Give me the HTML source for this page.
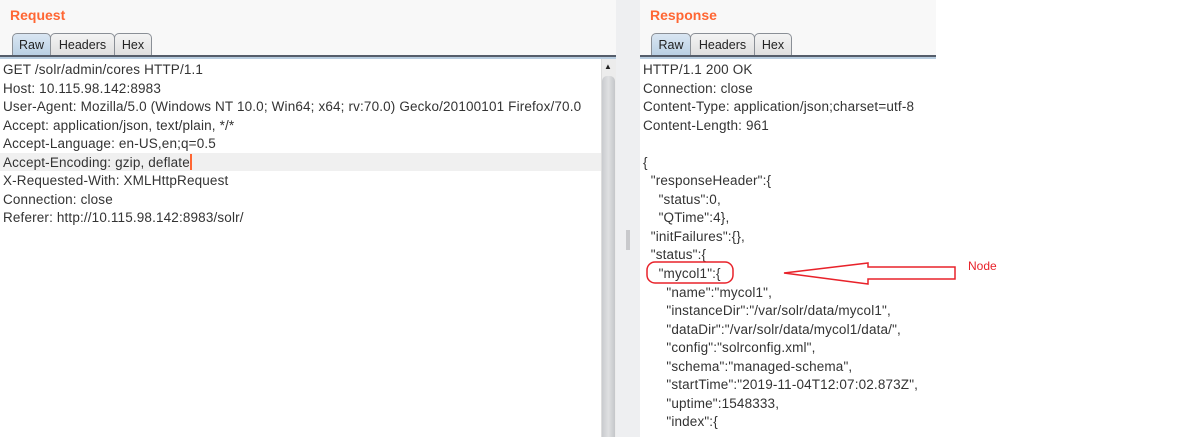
<!DOCTYPE html>
<html><head><style>
*{margin:0;padding:0;box-sizing:border-box}
body{width:1200px;height:437px;background:#fff;position:relative;overflow:hidden;font-family:"Liberation Sans",sans-serif}
.hdr{position:absolute;top:0;height:58px;background:#f8f8f8}
.title{position:absolute;top:7px;font-size:14px;font-weight:bold;color:#ff6633}
.tab{position:absolute;top:33px;height:23px;border:1px solid #8a8f96;border-bottom:none;border-radius:5px 5px 0 0;background:linear-gradient(#f4f4f4,#dedede);font-size:12.5px;color:#222;text-align:center;line-height:22px}
.tab.sel{background:linear-gradient(#d9e6f2,#b9cfe3)}
.line{position:absolute;top:55px;height:4px;border-top:2px solid #555d6a;background:#b8cde0}
.txt{position:absolute;top:61px;font-size:13.5px;letter-spacing:0.15px;line-height:18.55px;color:#333;white-space:pre}
.cur{display:inline-block;width:2px;height:16px;background:#ff6633;vertical-align:-3px}
</style></head><body>
<div class="hdr" style="left:0;width:616px"></div>
<div class="hdr" style="left:640px;width:296px"></div>
<div class="title" style="left:10px">Request</div>
<div class="title" style="left:650px">Response</div>
<div class="tab sel" style="left:12px;width:39px">Raw</div>
<div class="tab" style="left:50px;width:65px">Headers</div>
<div class="tab" style="left:114px;width:38px">Hex</div>
<div class="tab sel" style="left:651px;width:40px">Raw</div>
<div class="tab" style="left:690px;width:65px">Headers</div>
<div class="tab" style="left:754px;width:38px">Hex</div>
<div class="line" style="left:0;width:616px"></div>
<div class="line" style="left:640px;width:296px"></div>
<div style="position:absolute;left:616px;top:0;width:24px;height:437px;background:#eeeff1"></div>
<div style="position:absolute;left:626px;top:230px;width:4px;height:20px;background:#c8c9cc"></div>
<div style="position:absolute;left:601px;top:59px;width:15px;height:378px;background:#ececec;border-left:1px solid #ddd"></div>
<div style="position:absolute;left:604px;top:62px;font-size:8px;color:#222">▲</div>
<div style="position:absolute;left:602px;top:76px;width:13px;height:361px;background:linear-gradient(90deg,#c9cbce,#dfe0e2,#c4c6c9);border-radius:5px 5px 0 0"></div>
<div style="position:absolute;left:0;top:153px;width:601px;height:18px;background:#f0f0f0"></div>
<div class="txt" style="left:3px">GET /solr/admin/cores HTTP/1.1
Host: 10.115.98.142:8983
User-Agent: Mozilla/5.0 (Windows NT 10.0; Win64; x64; rv:70.0) Gecko/20100101 Firefox/70.0
Accept: application/json, text/plain, */*
Accept-Language: en-US,en;q=0.5
Accept-Encoding: gzip, deflate<span class="cur"></span>
X-Requested-With: XMLHttpRequest
Connection: close
Referer: http://10.115.98.142:8983/solr/</div>
<div class="txt" style="left:643px">HTTP/1.1 200 OK
Connection: close
Content-Type: application/json;charset=utf-8
Content-Length: 961

{
  "responseHeader":{
    "status":0,
    "QTime":4},
  "initFailures":{},
  "status":{
    "mycol1":{
      "name":"mycol1",
      "instanceDir":"/var/solr/data/mycol1",
      "dataDir":"/var/solr/data/mycol1/data/",
      "config":"solrconfig.xml",
      "schema":"managed-schema",
      "startTime":"2019-11-04T12:07:02.873Z",
      "uptime":1548333,
      "index":{</div>
<svg style="position:absolute;left:0;top:0" width="1200" height="437">
<rect x="647" y="262" width="86" height="21" rx="8" fill="none" stroke="#e8222a" stroke-width="1.5"/>
<path d="M784 273 L868 263 L868 267 L955 267 L955 279 L868 279 L868 284 Z" fill="none" stroke="#e8222a" stroke-width="1.5"/>
<text x="968" y="270" font-family="Liberation Sans,sans-serif" font-size="12" fill="#e8222a">Node</text>
</svg>
</body></html>
